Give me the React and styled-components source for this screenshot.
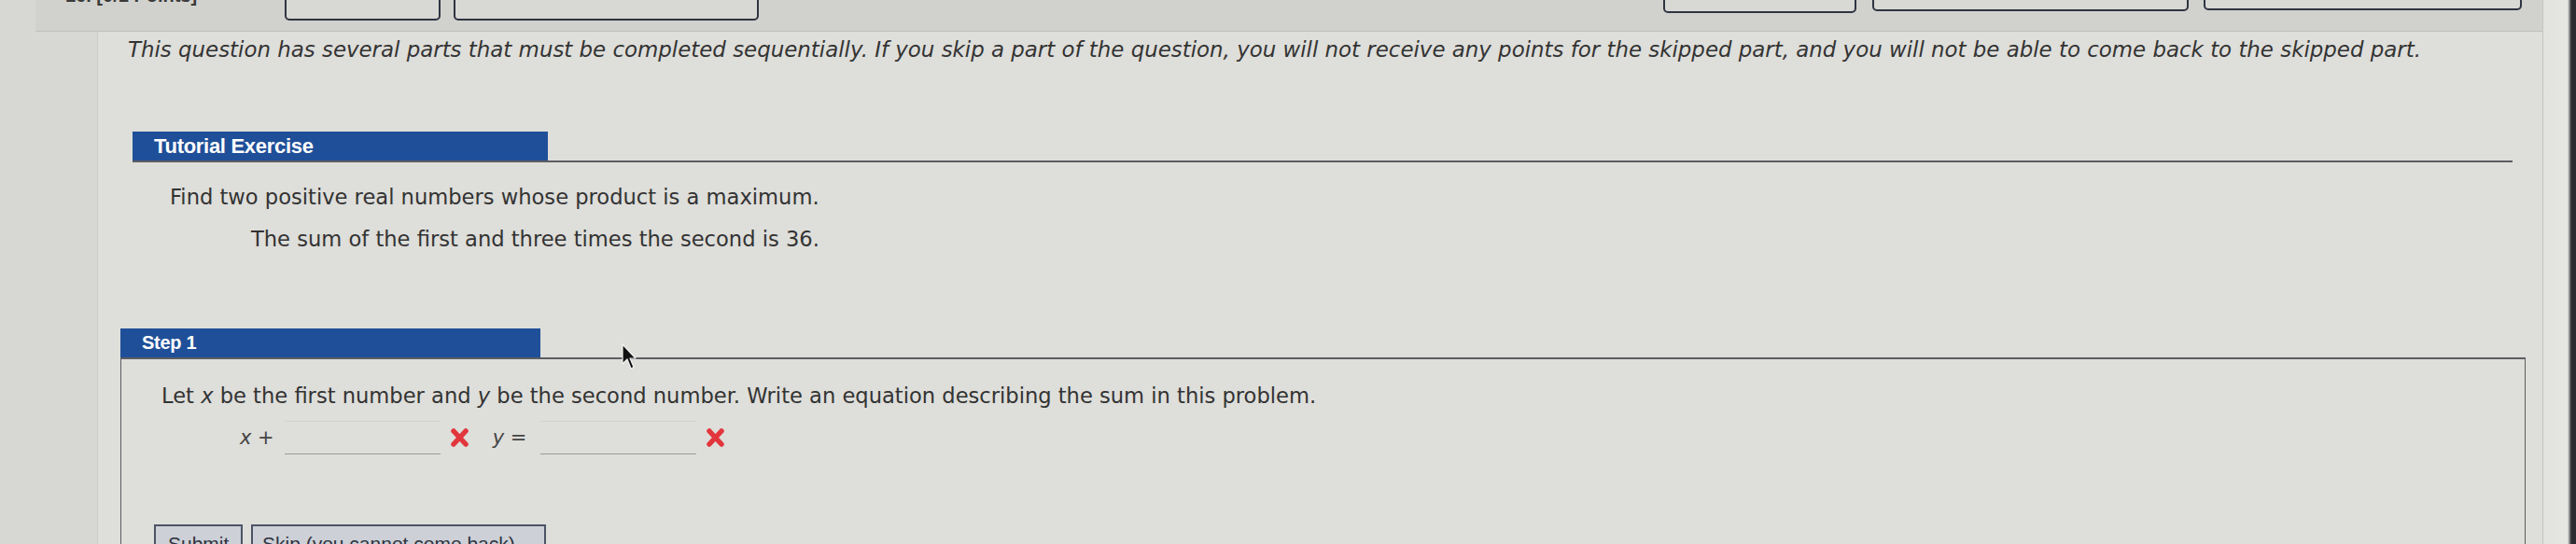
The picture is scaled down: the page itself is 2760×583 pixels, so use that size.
import React from 'react';
import styled, { createGlobalStyle } from 'styled-components';

const GlobalStyle = createGlobalStyle`
  html, body {
    margin: 0;
    padding: 0;
    overflow: hidden;
    background: #d7d7d3;
  }
`;

const Screen = styled.div`
  width: 2760px;
  height: 583px;
  overflow: hidden;
  display: flex;
  background: #d7d7d3;
  font-family: "DejaVu Sans", Verdana, sans-serif;
  color: #333;
`;

const Main = styled.div`
  flex: 1;
  display: flex;
  flex-direction: column;
  min-width: 0;
`;

const Edge = styled.div`
  width: 35px;
  background: linear-gradient(to right, #e2e2df 0, #e6e6e3 26px, #2a2c30 30px);
  border-left: 1px solid #c4c4c0;
`;

const TopBand = styled.div`
  margin-left: 38px;
  height: 34px;
  flex-shrink: 0;
  display: flex;
  align-items: flex-start;
  padding: 0 22px 0 32px;
  box-sizing: border-box;
  background: #d1d1cd;
  border-bottom: 1px solid #c0c0bc;
  overflow: hidden;
`;

const QuestionTitle = styled.div`
  width: 235px;
  flex-shrink: 0;
  margin-top: -15px;
  font-family: "Liberation Sans", Arial, sans-serif;
  font-weight: bold;
  font-size: 20px;
  line-height: 20px;
  color: #3a3a3a;
`;

const TopButton = styled.div`
  width: ${p => p.$w}px;
  height: 48px;
  margin-top: ${p => -p.$lift}px;
  flex-shrink: 0;
  margin-right: ${p => p.$gap || 0}px;
  box-sizing: border-box;
  border: 2px solid #2f3442;
  border-radius: 5px;
  display: flex;
  align-items: flex-end;
  justify-content: center;
  padding-bottom: 17px;
  font-family: "Liberation Sans", Arial, sans-serif;
  font-weight: bold;
  font-size: 20px;
  line-height: 20px;
  letter-spacing: 1px;
  color: #3a3f4c;
  background: #d8d8d4;
`;

const Spacer = styled.div`
  flex: 1;
`;

const Panel = styled.div`
  flex: 1;
  margin-left: 104px;
  background: #dededa;
  border-left: 1px solid #cbcbc7;
  display: flex;
  flex-direction: column;
`;

const Intro = styled.p`
  margin: 5px 0 0 32px;
  font-style: italic;
  font-size: 22.9px;
  line-height: 28px;
  white-space: nowrap;
  color: #333;
`;

const SectionHead = styled.div`
  position: relative;
  display: flex;
  flex-shrink: 0;
  margin: ${p => p.$top}px ${p => p.$right}px 0 ${p => p.$left}px;
  border-bottom: 2px solid #5c5d63;
`;

const HeadBar = styled.div`
  width: ${p => p.$w}px;
  height: 31px;
  background: #1f4f98;
  color: #ffffff;
  font-family: "Liberation Sans", Arial, sans-serif;
  font-weight: bold;
  font-size: ${p => p.$size}px;
  line-height: 31px;
  padding-left: ${p => p.$pad}px;
  box-sizing: border-box;
  letter-spacing: -0.3px;
`;

const Line = styled.p`
  margin: ${p => p.$top}px 0 0 ${p => p.$left}px;
  font-size: 22.6px;
  line-height: 28px;
  white-space: nowrap;
  color: #333;
`;

const StepBox = styled.div`
  flex: 1;
  margin: 0 18px 0 24px;
  border-left: 1.5px solid #5c5d63;
  border-right: 1.5px solid #5c5d63;
  padding: 25px 0 0 43px;
  display: flex;
  flex-direction: column;
`;

const Prompt = styled.p`
  margin: 0;
  font-size: 22.6px;
  line-height: 28px;
  white-space: nowrap;
  color: #333;
`;

const Var = styled.i`
  font-style: italic;
`;

const Equation = styled.div`
  display: flex;
  align-items: center;
  flex-shrink: 0;
  margin: 13px 0 0 84px;
  height: 36px;
  font-family: "DejaVu Sans", Verdana, sans-serif;
  font-size: 21px;
  color: #444;
`;

const Label = styled.span`
  margin-right: ${p => p.$gap}px;
  white-space: pre;
`;

const AnswerInput = styled.div`
  width: 167px;
  height: 36px;
  box-sizing: border-box;
  border-top: 1px solid #d0d0cc;
  border-bottom: 1.5px solid #9b9b98;
  margin-right: 10px;
`;

const Wrong = styled.svg`
  width: 21px;
  height: 22px;
  margin-right: ${p => p.$gap}px;
`;

const Actions = styled.div`
  display: flex;
  flex-shrink: 0;
  gap: 9px;
  margin: 75px 0 0 -8px;
`;

const ActionButton = styled.div`
  width: ${p => p.$w}px;
  height: 40px;
  box-sizing: border-box;
  border: 2px solid #4b5366;
  background: #cdd0d6;
  font-family: "Liberation Sans", Arial, sans-serif;
  font-size: 21px;
  padding: 7px 0 0 ${p => p.$pad}px;
  color: #2f3340;
  white-space: nowrap;
`;

const Cursor = styled.svg`
  position: absolute;
  left: 536px;
  top: 16px;
  width: 18px;
  height: 30px;
`;

const Cross = ({ gap }) => (
  <Wrong $gap={gap} viewBox="0 0 21 22">
    <path d="M4 4 L17 18 M17 4 L4 18" stroke="#e2363d" strokeWidth="5.5" strokeLinecap="round" fill="none" />
  </Wrong>
);

export default function App() {
  return (
    <>
      <GlobalStyle />
      <Screen>
        <Main>
          <TopBand>
            <QuestionTitle>16. [0/1 Points]</QuestionTitle>
            <TopButton $w={167} $gap={14} $lift={26}>DETAILS</TopButton>
            <TopButton $w={327} $lift={26}>PREVIOUS ANSWERS</TopButton>
            <Spacer />
            <TopButton $w={207} $gap={17} $lift={34}>MY NOTES</TopButton>
            <TopButton $w={339} $gap={16} $lift={36}>ASK YOUR TEACHER</TopButton>
            <TopButton $w={341} $lift={37}>PRACTICE ANOTHER</TopButton>
          </TopBand>
          <Panel>
            <Intro>
              This question has several parts that must be completed sequentially. If you skip a part of the question, you will not receive any points for the skipped part, and you will not be able to come back to the skipped part.
            </Intro>
            <SectionHead $top={74} $left={37} $right={32}>
              <HeadBar $w={445} $pad={23} $size={22}>Tutorial Exercise</HeadBar>
            </SectionHead>
            <Line $top={23} $left={77}>Find two positive real numbers whose product is a maximum.</Line>
            <Line $top={17} $left={164}>The sum of the first and three times the second is 36.</Line>
            <SectionHead $top={82} $left={24} $right={18}>
              <HeadBar $w={450} $pad={23} $size={20}>Step 1</HeadBar>
              <Cursor viewBox="0 0 18 30">
                <path d="M2 1 L2 22 L7 17 L11 27 L14 25.5 L10 16 L16 16 Z" fill="#111" stroke="#f2f2f2" strokeWidth="1.2" strokeLinejoin="round" />
              </Cursor>
            </SectionHead>
            <StepBox>
              <Prompt>
                Let <Var>x</Var> be the first number and <Var>y</Var> be the second number. Write an equation describing the sum in this problem.
              </Prompt>
              <Equation>
                <Label $gap={11}><Var>x</Var> +</Label>
                <AnswerInput />
                <Cross gap={25} />
                <Label $gap={15}><Var>y</Var> =</Label>
                <AnswerInput />
                <Cross gap={0} />
              </Equation>
              <Actions>
                <ActionButton $w={95} $pad={13}>Submit</ActionButton>
                <ActionButton $w={316} $pad={10}>Skip (you cannot come back)</ActionButton>
              </Actions>
            </StepBox>
          </Panel>
        </Main>
        <Edge />
      </Screen>
    </>
  );
}
